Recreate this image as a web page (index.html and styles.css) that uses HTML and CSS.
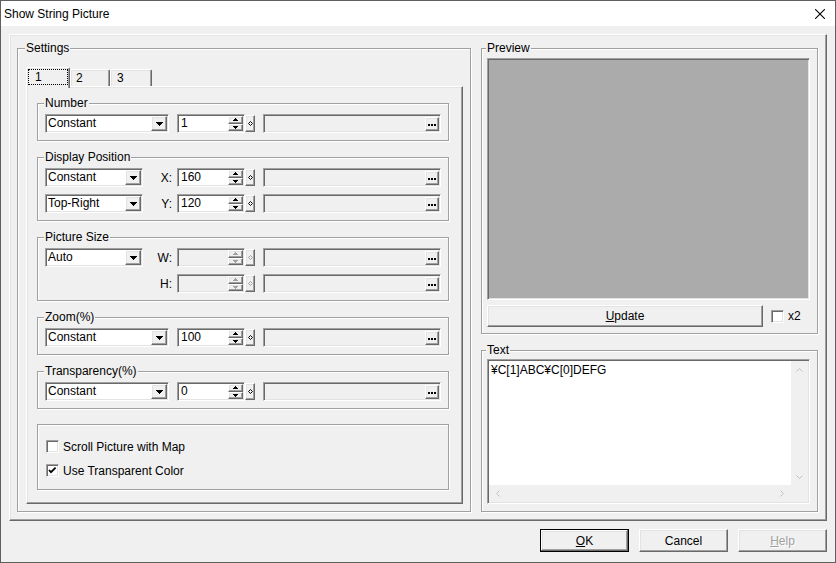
FILE: index.html
```html
<!DOCTYPE html>
<html lang="en">
<head>
    <meta charset="UTF-8">
    <title>Show String Picture</title>
    <link rel="stylesheet" href="styles.css">
</head>
<body>
    <div class="titlebar">
        <span class="title">Show String Picture</span>
        <svg class="close" width="10" height="10" viewBox="0 0 10 10"><path d="M0 0L10 10M10 0L0 10" stroke="#000" stroke-width="1.1"/></svg>
    </div>

    <div class="client">
        <div class="frame">
            <!-- Settings -->
            <fieldset class="group settings">
                <legend>Settings</legend>
                <div class="tabs">
                    <div class="tab active"><span class="focus">1</span></div>
                    <div class="tab">2</div>
                    <div class="tab tab-3">3</div>
                </div>
                <div class="tab-panel">
                    <fieldset class="group box">
                        <legend>Number</legend>
                        <div class="row">
                            <div class="combo"><span class="combo-text">Constant</span><span class="drop"><svg width="7" height="4"><path d="M0 0h7v1h-1v1h-1v1h-1v1h-1v-1h-1v-1h-1v-1h-1z"/></svg></span></div>
                            <span class="gap"></span>
                            <div class="spin"><span class="spin-text">1</span><span class="updown"><span class="ud"><svg width="5" height="3"><path d="M2 0h1v1h1v1h1v1h-5v-1h1v-1h1z"/></svg></span><span class="ud"><svg width="5" height="3"><path d="M0 0h5v1h-1v1h-1v1h-1v-1h-1v-1h-1z"/></svg></span></span></div>
                            <span class="diamond"><svg width="5" height="5"><path d="M2.5 0.5L4.5 2.5L2.5 4.5L0.5 2.5Z" fill="none" stroke="#000"/></svg></span>
                            <div class="field"><span class="dots"><svg width="8" height="2"><path d="M0 0h2v2h-2zM3 0h2v2h-2zM6 0h2v2h-2z"/></svg></span></div>
                        </div>
                    </fieldset>

                    <fieldset class="group box">
                        <legend>Display Position</legend>
                        <div class="row">
                            <div class="combo narrow"><span class="combo-text">Constant</span><span class="drop"><svg width="7" height="4"><path d="M0 0h7v1h-1v1h-1v1h-1v1h-1v-1h-1v-1h-1v-1h-1z"/></svg></span></div>
                            <span class="axis">X:</span>
                            <div class="spin"><span class="spin-text">160</span><span class="updown"><span class="ud"><svg width="5" height="3"><path d="M2 0h1v1h1v1h1v1h-5v-1h1v-1h1z"/></svg></span><span class="ud"><svg width="5" height="3"><path d="M0 0h5v1h-1v1h-1v1h-1v-1h-1v-1h-1z"/></svg></span></span></div>
                            <span class="diamond"><svg width="5" height="5"><path d="M2.5 0.5L4.5 2.5L2.5 4.5L0.5 2.5Z" fill="none" stroke="#000"/></svg></span>
                            <div class="field"><span class="dots"><svg width="8" height="2"><path d="M0 0h2v2h-2zM3 0h2v2h-2zM6 0h2v2h-2z"/></svg></span></div>
                        </div>
                        <div class="row">
                            <div class="combo narrow"><span class="combo-text">Top-Right</span><span class="drop"><svg width="7" height="4"><path d="M0 0h7v1h-1v1h-1v1h-1v1h-1v-1h-1v-1h-1v-1h-1z"/></svg></span></div>
                            <span class="axis">Y:</span>
                            <div class="spin"><span class="spin-text">120</span><span class="updown"><span class="ud"><svg width="5" height="3"><path d="M2 0h1v1h1v1h1v1h-5v-1h1v-1h1z"/></svg></span><span class="ud"><svg width="5" height="3"><path d="M0 0h5v1h-1v1h-1v1h-1v-1h-1v-1h-1z"/></svg></span></span></div>
                            <span class="diamond"><svg width="5" height="5"><path d="M2.5 0.5L4.5 2.5L2.5 4.5L0.5 2.5Z" fill="none" stroke="#000"/></svg></span>
                            <div class="field"><span class="dots"><svg width="8" height="2"><path d="M0 0h2v2h-2zM3 0h2v2h-2zM6 0h2v2h-2z"/></svg></span></div>
                        </div>
                    </fieldset>

                    <fieldset class="group box">
                        <legend>Picture Size</legend>
                        <div class="row">
                            <div class="combo narrow"><span class="combo-text">Auto</span><span class="drop"><svg width="7" height="4"><path d="M0 0h7v1h-1v1h-1v1h-1v1h-1v-1h-1v-1h-1v-1h-1z"/></svg></span></div>
                            <span class="axis">W:</span>
                            <div class="spin disabled"><span class="spin-text"></span><span class="updown"><span class="ud"><svg width="5" height="3"><path d="M2 0h1v1h1v1h1v1h-5v-1h1v-1h1z"/></svg></span><span class="ud"><svg width="5" height="3"><path d="M0 0h5v1h-1v1h-1v1h-1v-1h-1v-1h-1z"/></svg></span></span></div>
                            <span class="diamond disabled"><svg width="5" height="5"><path d="M2.5 0.5L4.5 2.5L2.5 4.5L0.5 2.5Z" fill="none" stroke="#000"/></svg></span>
                            <div class="field"><span class="dots"><svg width="8" height="2"><path d="M0 0h2v2h-2zM3 0h2v2h-2zM6 0h2v2h-2z"/></svg></span></div>
                        </div>
                        <div class="row">
                            <span class="combo-space"></span>
                            <span class="axis">H:</span>
                            <div class="spin disabled"><span class="spin-text"></span><span class="updown"><span class="ud"><svg width="5" height="3"><path d="M2 0h1v1h1v1h1v1h-5v-1h1v-1h1z"/></svg></span><span class="ud"><svg width="5" height="3"><path d="M0 0h5v1h-1v1h-1v1h-1v-1h-1v-1h-1z"/></svg></span></span></div>
                            <span class="diamond disabled"><svg width="5" height="5"><path d="M2.5 0.5L4.5 2.5L2.5 4.5L0.5 2.5Z" fill="none" stroke="#000"/></svg></span>
                            <div class="field"><span class="dots"><svg width="8" height="2"><path d="M0 0h2v2h-2zM3 0h2v2h-2zM6 0h2v2h-2z"/></svg></span></div>
                        </div>
                    </fieldset>

                    <fieldset class="group box">
                        <legend>Zoom(%)</legend>
                        <div class="row">
                            <div class="combo"><span class="combo-text">Constant</span><span class="drop"><svg width="7" height="4"><path d="M0 0h7v1h-1v1h-1v1h-1v1h-1v-1h-1v-1h-1v-1h-1z"/></svg></span></div>
                            <span class="gap"></span>
                            <div class="spin"><span class="spin-text">100</span><span class="updown"><span class="ud"><svg width="5" height="3"><path d="M2 0h1v1h1v1h1v1h-5v-1h1v-1h1z"/></svg></span><span class="ud"><svg width="5" height="3"><path d="M0 0h5v1h-1v1h-1v1h-1v-1h-1v-1h-1z"/></svg></span></span></div>
                            <span class="diamond"><svg width="5" height="5"><path d="M2.5 0.5L4.5 2.5L2.5 4.5L0.5 2.5Z" fill="none" stroke="#000"/></svg></span>
                            <div class="field"><span class="dots"><svg width="8" height="2"><path d="M0 0h2v2h-2zM3 0h2v2h-2zM6 0h2v2h-2z"/></svg></span></div>
                        </div>
                    </fieldset>

                    <fieldset class="group box">
                        <legend>Transparency(%)</legend>
                        <div class="row">
                            <div class="combo"><span class="combo-text">Constant</span><span class="drop"><svg width="7" height="4"><path d="M0 0h7v1h-1v1h-1v1h-1v1h-1v-1h-1v-1h-1v-1h-1z"/></svg></span></div>
                            <span class="gap"></span>
                            <div class="spin"><span class="spin-text">0</span><span class="updown"><span class="ud"><svg width="5" height="3"><path d="M2 0h1v1h1v1h1v1h-5v-1h1v-1h1z"/></svg></span><span class="ud"><svg width="5" height="3"><path d="M0 0h5v1h-1v1h-1v1h-1v-1h-1v-1h-1z"/></svg></span></span></div>
                            <span class="diamond"><svg width="5" height="5"><path d="M2.5 0.5L4.5 2.5L2.5 4.5L0.5 2.5Z" fill="none" stroke="#000"/></svg></span>
                            <div class="field"><span class="dots"><svg width="8" height="2"><path d="M0 0h2v2h-2zM3 0h2v2h-2zM6 0h2v2h-2z"/></svg></span></div>
                        </div>
                    </fieldset>

                    <div class="group box checks">
                        <label class="check"><span class="cbox"></span>Scroll Picture with Map</label>
                        <label class="check"><span class="cbox"><svg width="9" height="9" viewBox="0 0 9 9"><path d="M1 4l2 2.2L7.6 1.6" fill="none" stroke="#000" stroke-width="1.8"/></svg></span>Use Transparent Color</label>
                    </div>
                </div>
            </fieldset>

            <!-- Preview and Text -->
            <div class="side">
                <fieldset class="group preview-group">
                    <legend>Preview</legend>
                    <div class="preview"></div>
                    <div class="update-row">
                        <button class="btn update"><u>U</u>pdate</button>
                        <label class="check x2"><span class="cbox"></span>x2</label>
                    </div>
                </fieldset>

                <fieldset class="group text-group">
                    <legend>Text</legend>
                    <div class="textbox">
                        <div class="text-area">¥C[1]ABC¥C[0]DEFG</div>
                        <div class="vscroll">
                            <svg width="7" height="4"><path d="M0.5 3.5L3.5 0.5L6.5 3.5" fill="none" stroke="#c2c2c2"/></svg>
                            <svg width="7" height="4"><path d="M0.5 0.5L3.5 3.5L6.5 0.5" fill="none" stroke="#c2c2c2"/></svg>
                        </div>
                        <div class="hscroll">
                            <svg width="4" height="7"><path d="M3.5 0.5L0.5 3.5L3.5 6.5" fill="none" stroke="#c2c2c2"/></svg>
                            <svg width="4" height="7"><path d="M0.5 0.5L3.5 3.5L0.5 6.5" fill="none" stroke="#c2c2c2"/></svg>
                        </div>
                        <div class="corner"></div>
                    </div>
                </fieldset>
            </div>
        </div>

        <div class="buttons">
            <button class="btn default"><u>O</u>K</button>
            <button class="btn">Cancel</button>
            <button class="btn disabled"><u>H</u>elp</button>
        </div>
    </div>
</body>
</html>
```

FILE: styles.css
```css
* {
    box-sizing: border-box;
}

body {
    margin: 0;
    width: 836px;
    height: 563px;
    border: 1px solid #5f5f5f;
    background-color: #f0f0f0;
    font-family: "Liberation Sans", Arial, sans-serif;
    font-size: 12px;
    line-height: 14px;
    color: #000;
    display: flex;
    flex-direction: column;
    overflow: hidden;
}

.titlebar {
    height: 25px;
    flex-shrink: 0;
    background-color: #fff;
    display: flex;
    align-items: center;
    justify-content: space-between;
    padding: 0 10px 0 3px;
}

.client {
    flex: 1;
    padding: 8px 8px 0 8px;
}

/* raised 3d edge */
.frame,
.tab-panel,
.drop,
.ud,
.diamond,
.dots,
.btn {
    border: 1px solid;
    border-color: #fff #696969 #696969 #fff;
    box-shadow: inset -1px -1px 0 #a0a0a0, inset 1px 1px 0 #e3e3e3;
    background-color: #f0f0f0;
}

/* sunken 3d edge */
.combo,
.spin,
.field,
.cbox,
.preview,
.textbox {
    border: 1px solid;
    border-color: #a0a0a0 #fff #fff #a0a0a0;
    box-shadow: inset 1px 1px 0 #696969, inset -1px -1px 0 #e3e3e3;
}

.frame {
    height: 487px;
    display: flex;
    gap: 10px;
    padding: 6px 8px 8px 7px;
}

/* group boxes */
.group {
    margin: 0;
    min-width: 0;
    border: 1px solid #a0a0a0;
    box-shadow: 1px 1px 0 #fff, inset 1px 1px 0 #fff;
}

.group legend {
    padding: 0 1px;
    margin-left: -1px;
    line-height: 14px;
    background-color: #f0f0f0;
}

.settings {
    width: 454px;
    padding: 12px 7px 7px 8px;
}

/* tabs */
.tabs {
    display: flex;
    align-items: flex-end;
    height: 19px;
}

.tab {
    width: 40px;
    height: 17px;
    padding: 1px 0 0 5px;
    border: 1px solid;
    border-bottom: none;
    border-color: #fff #696969 transparent #fff;
    border-radius: 2px 2px 0 0;
    box-shadow: inset -1px 0 0 #a0a0a0, inset 1px 1px 0 #e3e3e3;
}

.tab-3 {
    width: 42px;
    padding-left: 6px;
}

.tab.active {
    position: relative;
    z-index: 1;
    width: 44px;
    height: 21px;
    margin-bottom: -2px;
    padding: 1px 1px 0 1px;
    background-color: #f0f0f0;
}

.focus {
    display: block;
    height: 16px;
    padding: 0 0 0 6px;
    border: 1px dotted #000;
}

.tab-panel {
    height: 418px;
    padding: 9px 0 0 10px;
}

.box {
    width: 412px;
    margin-top: 9px;
    padding: 4px 7px 7px 7px;
}

.box:first-child {
    margin-top: 0;
}

.row {
    display: flex;
    align-items: center;
    height: 19px;
}

.row + .row {
    margin-top: 7px;
}

/* combo box */
.combo {
    width: 124px;
    height: 19px;
    display: flex;
    padding: 1px;
    background-color: #fff;
}

.combo.narrow {
    width: 98px;
}

.combo-space {
    width: 98px;
}

.combo-text {
    flex: 1;
    padding-left: 1px;
    line-height: 15px;
}

.drop {
    width: 16px;
    display: flex;
    align-items: center;
    justify-content: center;
}

.gap {
    width: 8px;
}

.axis {
    width: 34px;
    padding-right: 5px;
    text-align: right;
}

/* spin edit */
.spin {
    width: 68px;
    height: 19px;
    display: flex;
    padding: 1px;
    background-color: #fff;
}

.spin-text {
    flex: 1;
    padding-left: 2px;
    line-height: 15px;
}

.updown {
    width: 15px;
    display: flex;
    flex-direction: column;
}

.ud {
    flex: 1;
    display: flex;
    align-items: center;
    justify-content: center;
}

.spin.disabled {
    background-color: #f0f0f0;
}

.spin.disabled path {
    fill: #a0a0a0;
}

.diamond {
    width: 10px;
    height: 17px;
    display: flex;
    align-items: center;
    justify-content: center;
}

.diamond.disabled path {
    stroke: #a0a0a0;
}

.field {
    width: 178px;
    height: 19px;
    margin-left: 8px;
    padding: 1px;
    display: flex;
    align-items: center;
    justify-content: flex-end;
    background-color: #f0f0f0;
}

.dots {
    width: 14px;
    height: 14px;
    display: flex;
    align-items: flex-end;
    justify-content: center;
    padding-bottom: 4px;
}

/* check boxes */
.checks {
    margin-top: 15px;
    padding: 15px 7px 12px 8px;
    display: flex;
    flex-direction: column;
    gap: 11px;
}

.check {
    display: flex;
    align-items: center;
    gap: 4px;
    height: 13px;
}

.cbox {
    width: 13px;
    height: 13px;
    display: flex;
    align-items: center;
    justify-content: center;
    background-color: #fff;
}

/* right side */
.side {
    flex: 1;
    display: flex;
    flex-direction: column;
}

.preview-group {
    padding: 3px 7px 6px 5px;
}

.preview {
    height: 242px;
    background-color: #ababab;
}

.update-row {
    display: flex;
    align-items: center;
    margin-top: 5px;
}

.btn {
    height: 23px;
    width: 89px;
    padding: 0;
    font: inherit;
    color: #000;
}

.btn.update {
    width: 276px;
    height: 22px;
}

.x2 {
    margin-left: 8px;
}

.text-group {
    margin-top: 9px;
    padding: 2px 7px 7px 5px;
}

.textbox {
    height: 145px;
    padding: 1px;
    display: grid;
    grid-template-columns: 1fr 17px;
    grid-template-rows: 1fr 17px;
}

.text-area {
    background-color: #fff;
    padding: 2px 0 0 2px;
}

.vscroll {
    display: flex;
    flex-direction: column;
    align-items: center;
    justify-content: space-between;
    padding: 7px 0 6px;
    background-color: #f0f0f0;
}

.hscroll {
    display: flex;
    align-items: center;
    justify-content: space-between;
    padding: 0 7px;
    background-color: #f0f0f0;
}

.corner {
    background-color: #f0f0f0;
}

/* dialog buttons */
.buttons {
    display: flex;
    justify-content: flex-end;
    gap: 10px;
    margin-top: 8px;
}

.btn.default {
    border-color: #000;
    box-shadow: inset -1px -1px 0 #696969, inset 1px 1px 0 #fff, inset -2px -2px 0 #a0a0a0, inset 2px 2px 0 #e3e3e3;
}

.btn.disabled {
    color: #a0a0a0;
    text-shadow: 1px 1px 0 #fff;
}
```
